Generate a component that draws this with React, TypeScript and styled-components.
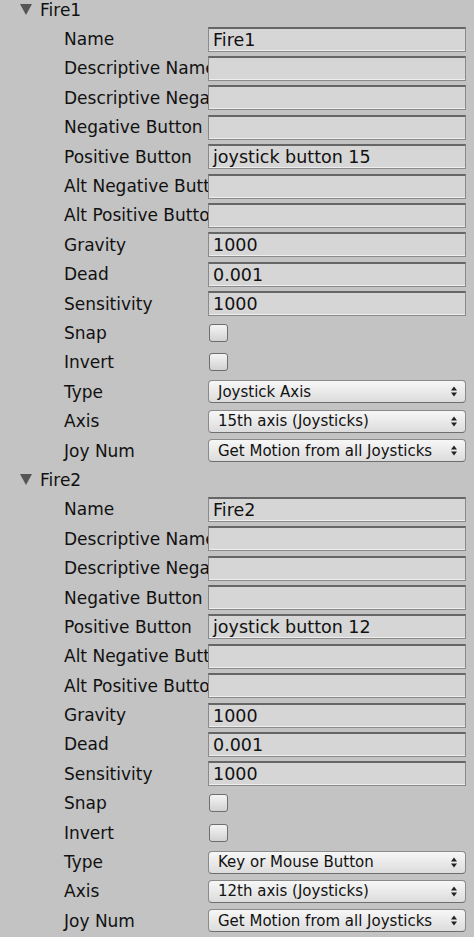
import React from "react";
import styled, { createGlobalStyle } from "styled-components";

const Global = createGlobalStyle`
  html, body { margin: 0; padding: 0; background: #c3c3c3; }
  body { font-family: "DejaVu Sans", "Liberation Sans", sans-serif; color: #111; overflow: hidden; }
`;

const Page = styled.div`
  width: 474px;
  height: 937px;
  overflow: hidden;
  background: #c3c3c3;
`;

const List = styled.div`
  display: flex;
  flex-direction: column;
  margin-top: -5px;
`;

const Row = styled.div`
  height: 29.4px;
  display: flex;
  align-items: center;
`;

const Header = styled(Row)`
  padding-left: 20px;
  gap: 8px;
  font-size: 17px;
`;

const Label = styled.div`
  width: 208px;
  padding-left: 64px;
  box-sizing: border-box;
  white-space: nowrap;
  overflow: hidden;
  font-size: 17px;
  flex: none;
`;

const Control = styled.div`
  width: 258px;
  display: flex;
  align-items: center;
  flex: none;
`;

const TextField = styled.div`
  width: 100%;
  height: 25px;
  box-sizing: border-box;
  background: #d6d6d6;
  border: 1px solid #8a8a8a;
  border-top: 2px solid #666;
  box-shadow: inset 0 -1px 0 #eeeeee;
  padding-left: 4px;
  display: flex;
  align-items: center;
  font-size: 17.5px;
  white-space: nowrap;
  overflow: hidden;
`;

const Check = styled.div`
  width: 19px;
  height: 18px;
  margin-left: 1px;
  box-sizing: border-box;
  border: 1px solid #6e6e6e;
  border-radius: 3px;
  background: linear-gradient(#f4f4f4, #d2d2d2);
`;

const Select = styled.div`
  width: 100%;
  height: 23px;
  box-sizing: border-box;
  border: 1px solid #8a8a8a;
  border-bottom-color: #6e6e6e;
  border-radius: 4px;
  background: linear-gradient(#f7f7f7, #dcdcdc);
  display: flex;
  align-items: center;
  justify-content: space-between;
  padding: 0 8px 0 9px;
  font-size: 15px;
  white-space: nowrap;
`;

const Arrow = () => (
  <svg width="6" height="11" viewBox="0 0 6 11">
    <path d="M0 4.5 L3 0.5 L6 4.5 Z M0 6.5 L3 10.5 L6 6.5 Z" fill="#222" />
  </svg>
);

const Tri = () => (
  <svg width="12" height="11" viewBox="0 0 12 11">
    <path d="M0 0 L12 0 L6 11 Z" fill="#555" />
  </svg>
);

type Item =
  | { label: string; kind: "text"; value?: string }
  | { label: string; kind: "check" }
  | { label: string; kind: "select"; value: string };

const items = (name: string, btn: string, type: string, axis: string): Item[] => [
  { label: "Name", kind: "text", value: name },
  { label: "Descriptive Name", kind: "text" },
  { label: "Descriptive Negative Name", kind: "text" },
  { label: "Negative Button", kind: "text" },
  { label: "Positive Button", kind: "text", value: btn },
  { label: "Alt Negative Button", kind: "text" },
  { label: "Alt Positive Button", kind: "text" },
  { label: "Gravity", kind: "text", value: "1000" },
  { label: "Dead", kind: "text", value: "0.001" },
  { label: "Sensitivity", kind: "text", value: "1000" },
  { label: "Snap", kind: "check" },
  { label: "Invert", kind: "check" },
  { label: "Type", kind: "select", value: type },
  { label: "Axis", kind: "select", value: axis },
  { label: "Joy Num", kind: "select", value: "Get Motion from all Joysticks" },
];

const sections = [
  { title: "Fire1", rows: items("Fire1", "joystick button 15", "Joystick Axis", "15th axis (Joysticks)") },
  { title: "Fire2", rows: items("Fire2", "joystick button 12", "Key or Mouse Button", "12th axis (Joysticks)") },
];

export default function App() {
  return (
    <Page>
      <Global />
      <List>
        {sections.map((s) => (
          <React.Fragment key={s.title}>
            <Header>
              <Tri />
              <span>{s.title}</span>
            </Header>
            {s.rows.map((r) => (
              <Row key={s.title + r.label}>
                <Label>{r.label}</Label>
                <Control>
                  {r.kind === "text" && <TextField>{r.value ?? ""}</TextField>}
                  {r.kind === "check" && <Check />}
                  {r.kind === "select" && (
                    <Select>
                      <span>{r.value}</span>
                      <Arrow />
                    </Select>
                  )}
                </Control>
              </Row>
            ))}
          </React.Fragment>
        ))}
      </List>
    </Page>
  );
}
